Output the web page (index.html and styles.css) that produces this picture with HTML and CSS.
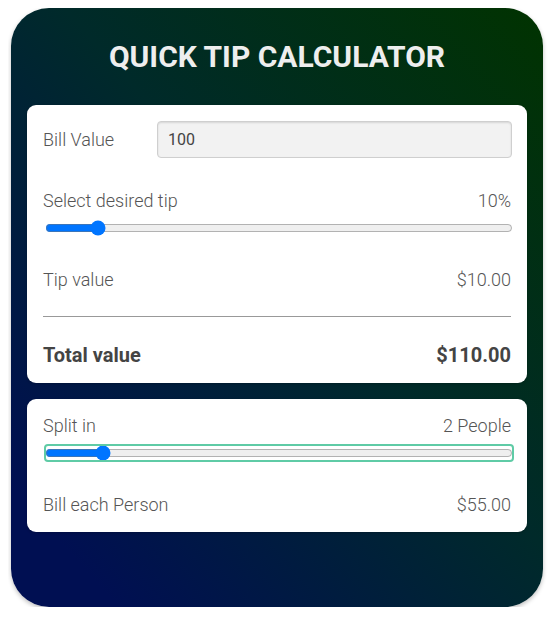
FILE: index.html
```html
<!DOCTYPE html>
<html>
<head>
<meta charset="utf-8">
<link rel="stylesheet" href="styles.css">
</head>
<body>
<div class="app">
  <h1 class="title">QUICK TIP CALCULATOR</h1>
  <div class="card">
    <div class="row bill">
      <span class="label">Bill Value</span>
      <input class="bill-input" type="text" value="100">
    </div>
    <div class="row head">
      <span class="label">Select desired tip</span>
      <span class="value">10%</span>
    </div>
    <input class="slider" type="range" min="0" max="100" value="10">
    <div class="row tip">
      <span class="label">Tip value</span>
      <span class="value">$10.00</span>
    </div>
    <hr class="divider">
    <div class="row total">
      <span class="label">Total value</span>
      <span class="value">$110.00</span>
    </div>
  </div>
  <div class="card card2">
    <div class="row head">
      <span class="label">Split in</span>
      <span class="value">2 People</span>
    </div>
    <input class="slider slider2" type="range" min="1" max="10" value="2">
    <div class="row each">
      <span class="label">Bill each Person</span>
      <span class="value">$55.00</span>
    </div>
  </div>
</div>
</body>
</html>
```
FILE: styles.css
```css
body {
  margin: 8px;
  font-family: Roboto, "Liberation Sans", sans-serif;
  background: #fff;
}
.app {
  width: 532px;
  height: 599px;
  box-sizing: border-box;
  margin-left: 3px;
  padding: 0 16px;
  border-radius: 38px;
  background: linear-gradient(to top right, #000f52 10%, #002a2a 55%, #013300 100%);
  box-shadow: 0 2px 4px rgba(0,0,0,0.25);
}
.title {
  margin: 0;
  padding: 32px 0 31px;
  text-align: center;
  color: #eeeeee;
  font-size: 30px;
  font-weight: 700;
  line-height: 34px;
}
.card {
  background: #fff;
  border-radius: 9px;
  padding: 16px 16px 0;
  height: 278px;
  box-sizing: border-box;
  box-shadow: 0 1px 3px rgba(0,0,0,0.2);
  color: #555;
}
.card2 {
  margin-top: 16px;
  height: 133px;
  padding-top: 17px;
}
.row {
  display: flex;
  justify-content: space-between;
  align-items: center;
  font-size: 18px;
  font-weight: 300;
  line-height: 20px;
}
.bill {
  justify-content: flex-start;
}
.bill .label {
  width: 114px;
}
.bill-input {
  flex: 1;
  height: 37px;
  box-sizing: border-box;
  margin: 0 -1px 0 0;
  border: 1px solid #cfcfcf;
  border-radius: 4px;
  background: #f2f2f2;
  box-shadow: inset 0 1px 2px rgba(0,0,0,0.12);
  padding: 0 10px;
  font-family: inherit;
  font-size: 16px;
  color: #444;
}
.head {
  margin-top: 33px;
}
.card2 .head {
  margin-top: 0;
}
.slider {
  display: block;
  width: 100%;
  margin: 9px 2px 0;
  height: 16px;
  accent-color: #0075ff;
}
.slider2 {
  margin-top: 9px;
  outline: 2px solid #5fcba6;
  outline-offset: -1px;
  border-radius: 3px;
}
.tip {
  margin-top: 34px;
}
.divider {
  border: 0;
  border-top: 1px solid #999;
  margin: 26px 0 0;
}
.total {
  margin-top: 28px;
  font-weight: 700;
  font-size: 20px;
  color: #444;
}
.each {
  margin-top: 34px;
}
```
